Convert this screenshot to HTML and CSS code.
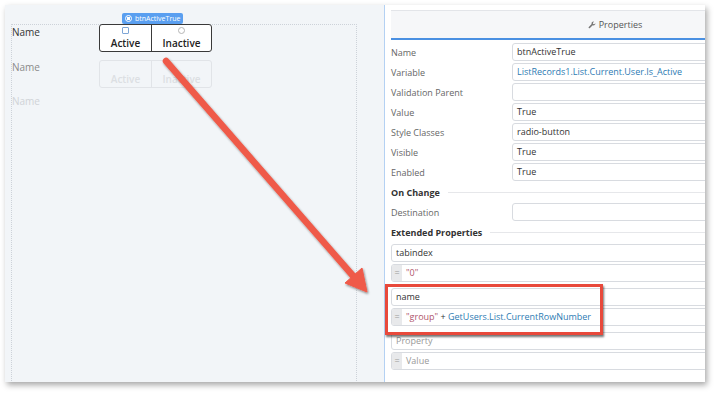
FILE: index.html
```html
<!DOCTYPE html>
<html lang="en">
<head>
    <meta charset="UTF-8">
    <title>Properties</title>
    <link rel="stylesheet" href="styles.css">
</head>
<body>
    <div class="stage">
        <div class="shot">
            <div class="canvas">
                <div class="frame">
                    <div class="row">
                        <span class="lbl">Name</span>
                        <div class="seg selected">
                            <span class="badge"><i class="radio"></i>btnActiveTrue</span>
                            <div class="opt"><i class="box"></i>Active</div>
                            <div class="opt"><i class="dot"></i>Inactive</div>
                        </div>
                    </div>
                    <div class="row">
                        <span class="lbl faded">Name</span>
                        <div class="seg ghost">
                            <div class="opt"><i class="blank"></i>Active</div>
                            <div class="opt"><i class="blank"></i>Inactive</div>
                        </div>
                    </div>
                    <div class="row">
                        <span class="lbl faint">Name</span>
                    </div>
                </div>
            </div>

            <div class="props">
                <div class="head">
                    <svg class="wrench" viewBox="0 0 16 16"><path d="M11 1a4 4 0 0 0-3.8 5.2L1.6 11.8a1.6 1.6 0 0 0 2.3 2.3l5.6-5.6A4 4 0 0 0 14.8 4.3l-2.3 2.3-2.2-.6-.6-2.2L12 1.4A4 4 0 0 0 11 1z"/></svg>
                    Properties
                </div>
                <div class="list">
                    <div class="prop"><span>Name</span><div class="field">btnActiveTrue</div></div>
                    <div class="prop"><span>Variable</span><div class="field ref">ListRecords1.List.Current.User.Is_Active</div></div>
                    <div class="prop"><span>Validation Parent</span><div class="field"></div></div>
                    <div class="prop"><span>Value</span><div class="field">True</div></div>
                    <div class="prop"><span>Style Classes</span><div class="field">radio-button</div></div>
                    <div class="prop"><span>Visible</span><div class="field">True</div></div>
                    <div class="prop"><span>Enabled</span><div class="field">True</div></div>
                    <div class="section">On Change</div>
                    <div class="prop"><span>Destination</span><div class="field"></div></div>
                    <div class="section">Extended Properties</div>

                    <div class="extended">
                        <div class="pair">
                            <div class="field">tabindex</div>
                            <div class="expr"><b>=</b><span class="str">"0"</span></div>
                        </div>
                        <div class="pair">
                            <div class="field">name</div>
                            <div class="expr"><b>=</b><span class="str">"group"</span>&nbsp;+&nbsp;<span class="ref">GetUsers.List.CurrentRowNumber</span></div>
                        </div>
                        <div class="pair">
                            <div class="field hint">Property</div>
                            <div class="expr"><b>=</b><span class="hint">Value</span></div>
                        </div>
                    </div>
                </div>
            </div>
        </div>

        <div class="mark"></div>

        <svg class="arrow" width="720" height="395" viewBox="0 0 720 395">
            <defs>
                <filter id="sh" x="-10%" y="-10%" width="130%" height="130%">
                    <feDropShadow dx="1" dy="1.5" stdDeviation="1.2" flood-color="#000" flood-opacity="0.45"/>
                </filter>
            </defs>
            <g filter="url(#sh)" fill="#ef5a49" stroke="#ef5a49">
                <line x1="166" y1="61" x2="354" y2="277" stroke-width="6.5" stroke-linecap="round"/>
                <polygon points="367,292 345,283 362,268" stroke-width="1" stroke-linejoin="round"/>
            </g>
        </svg>
    </div>
</body>
</html>
```

FILE: styles.css
```css
body {
    margin: 0;
    background: #fff;
    font-family: "Open Sans", "Noto Sans", sans-serif;
}
.stage {
    position: relative;
    width: 720px;
    height: 395px;
    overflow: hidden;
}
.shot {
    display: flex;
    margin: 5px 0 0 5px;
    width: 700px;
    height: 377px;
    overflow: hidden;
    box-shadow: 2px 3px 6px rgba(0,0,0,0.35);
}

/* canvas side */
.canvas {
    width: 379px;
    flex: none;
    background: #f2f5f8;
    border-right: 1px solid #b4d1f3;
}
.frame {
    margin: 19px 0 0 6px;
    width: 344px;
    height: 400px;
    border-top: 1px dotted #cdd2d9;
    border-left: 1px dotted #cdd2d9;
    border-right: 1px dotted #cdd2d9;
}
.row {
    display: flex;
    align-items: flex-start;
    height: 28px;
    margin-bottom: 6.5px;
}
.lbl {
    width: 87px;
    font-size: 10px;
    line-height: 14px;
    color: #333;
}
.lbl.faded { color: #8a8a8a; }
.lbl.faint { color: #d0d3d7; }
.seg {
    position: relative;
    display: flex;
    height: 28px;
    box-sizing: border-box;
    border-radius: 3px;
    margin-top: -1px;
}
.seg.selected {
    border: 1px solid #3a3a3a;
    background: #fff;
    color: #222;
}
.seg.ghost {
    margin-top: 0;
    border: 1px solid #e1e4e8;
    color: #dcdfe3;
}
.opt {
    display: flex;
    flex-direction: column;
    align-items: center;
    padding-top: 2px;
    font-size: 10px;
    font-weight: 600;
    line-height: 14px;
    width: 51px;
}
.opt + .opt {
    width: 59px;
    border-left: 1px solid #3a3a3a;
}
.ghost .opt + .opt {
    border-left-color: #e1e4e8;
}
.opt i {
    display: block;
    width: 7px;
    height: 7px;
    box-sizing: border-box;
    margin-bottom: 2px;
}
.box {
    border: 1px solid #7ea6d6;
    border-radius: 1px;
}
.dot {
    border: 1px solid #b5b5b5;
    border-radius: 50%;
}
.badge {
    position: absolute;
    left: 22px;
    top: -12px;
    height: 11px;
    padding: 0 3px;
    display: flex;
    align-items: center;
    gap: 3px;
    background: #5a9ff0;
    border-radius: 2px;
    color: #fff;
    font-size: 7px;
    white-space: nowrap;
}
.radio {
    width: 7px;
    height: 7px;
    box-sizing: border-box;
    border: 1px solid #fff;
    border-radius: 50%;
    background: radial-gradient(circle, #fff 0 1.6px, transparent 1.8px);
}

/* properties side */
.props {
    flex: none;
    width: 448px;
    padding-left: 6px;
    background: #fff;
}
.head {
    margin-top: 5px;
    height: 27px;
    border-top: 1px solid #e3e5e9;
    border-bottom: 2px solid #4a90e2;
    background: #f6f7f9;
    display: flex;
    align-items: center;
    justify-content: center;
    gap: 3px;
    font-size: 9px;
    color: #555;
}
.wrench {
    width: 8px;
    height: 8px;
    fill: #777;
}
.list {
    padding-top: 2px;
    font-size: 9px;
    color: #333;
}
.prop {
    display: flex;
    align-items: center;
    height: 20px;
}
.prop span {
    width: 121px;
    color: #666;
}
.field,
.expr {
    flex: 1;
    height: 18px;
    box-sizing: border-box;
    border: 1px solid #d8dbe0;
    border-radius: 3px;
    background: #fff;
    padding-left: 4px;
    line-height: 16px;
    white-space: nowrap;
}
.section {
    display: flex;
    align-items: center;
    gap: 8px;
    height: 20px;
    font-weight: 700;
    color: #333;
}
.section::after {
    content: "";
    flex: 1;
    border-top: 1px solid #e6e7ea;
}
.extended {
    display: flex;
    flex-direction: column;
    gap: 6px;
    padding-top: 2px;
}
.pair {
    display: flex;
    flex-direction: column;
    gap: 2px;
}
.expr {
    display: flex;
    padding-left: 0;
}
.expr b {
    width: 10px;
    flex: none;
    margin-right: 4px;
    background: #e8e9eb;
    border-radius: 2px 0 0 2px;
    color: #999;
    font-weight: 400;
    text-align: center;
}
.ref { color: #2d7bb3; }
.str { color: #b0566c; }
.hint { color: #999; }

/* annotation box over the panel */
.mark {
    position: absolute;
    left: 385px;
    top: 284px;
    width: 218px;
    height: 51px;
    box-sizing: border-box;
    border: 3px solid #e8493b;
    box-shadow: 1px 2px 2px rgba(0,0,0,0.55);
}
.arrow {
    position: absolute;
    left: 0;
    top: 0;
    pointer-events: none;
}
```
